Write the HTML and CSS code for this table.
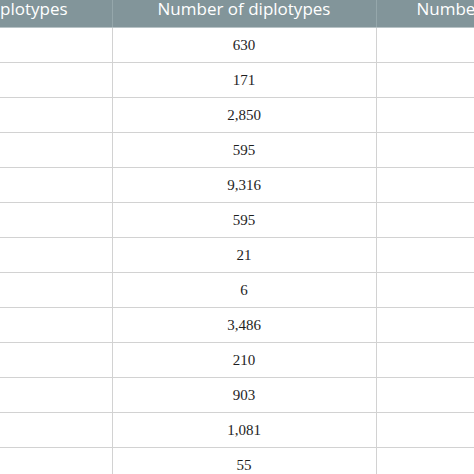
FILE: index.html
```html
<!DOCTYPE html>
<html>
<head>
<meta charset="utf-8">
<link rel="stylesheet" href="styles.css">
</head>
<body>
<table class="tbl">
  <colgroup>
    <col class="c1"><col class="c2"><col class="c3">
  </colgroup>
  <thead>
    <tr>
      <th class="h-left"><span>plotypes</span></th>
      <th class="h-mid"><span>Number of diplotypes</span></th>
      <th class="h-right"><span>Numbe</span></th>
    </tr>
  </thead>
  <tbody>
    <tr><td></td><td>630</td><td></td></tr>
    <tr><td></td><td>171</td><td></td></tr>
    <tr><td></td><td>2,850</td><td></td></tr>
    <tr><td></td><td>595</td><td></td></tr>
    <tr><td></td><td>9,316</td><td></td></tr>
    <tr><td></td><td>595</td><td></td></tr>
    <tr><td></td><td>21</td><td></td></tr>
    <tr><td></td><td>6</td><td></td></tr>
    <tr><td></td><td>3,486</td><td></td></tr>
    <tr><td></td><td>210</td><td></td></tr>
    <tr><td></td><td>903</td><td></td></tr>
    <tr><td></td><td>1,081</td><td></td></tr>
    <tr><td></td><td>55</td><td></td></tr>
  </tbody>
</table>
</body>
</html>
```
FILE: styles.css
```css
html, body {
  margin: 0;
  padding: 0;
  background: #ffffff;
  overflow: hidden;
}
.tbl {
  border-collapse: collapse;
  table-layout: fixed;
  width: 474px;
}
.c1 { width: 112px; }
.c2 { width: 264px; }
.c3 { width: 98px; }
.tbl th {
  background: #82959a;
  color: #ffffff;
  font-family: "Open Sans", "Noto Sans", sans-serif;
  font-weight: 400;
  font-size: 17px;
  height: 17px;
  padding: 0 0 10px 0;
  line-height: 17px;
  vertical-align: top;
  text-align: center;
  white-space: nowrap;
  border-left: 1px solid #95a7ab;
  border-bottom: 1px solid #b8c3c6;
}
.tbl th:first-child { border-left: none; }
.tbl th.h-left {
  text-align: right;
  padding-right: 46px;
}
.tbl th.h-right {
  text-align: left;
  padding-left: 40px;
}
.tbl td {
  height: 34px;
  padding: 0;
  text-align: center;
  font-family: "Liberation Serif", "Times New Roman", serif;
  font-size: 15px;
  color: #1e1e1e;
  border-bottom: 1px solid #d2d2d2;
  border-left: 1px solid #d2d2d2;
}
.tbl td:first-child { border-left: none; }
```
